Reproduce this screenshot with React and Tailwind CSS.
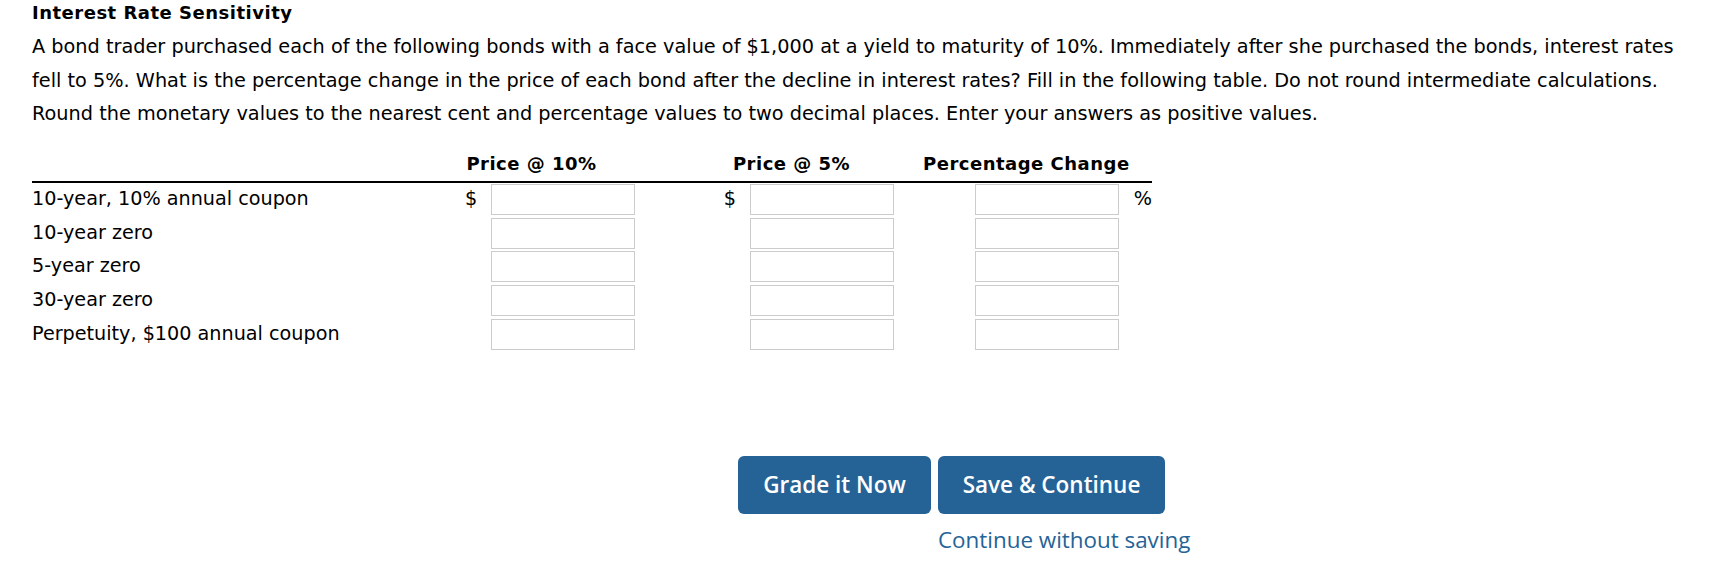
import React from "react";

const rows = [
  "10-year, 10% annual coupon",
  "10-year zero",
  "5-year zero",
  "30-year zero",
  "Perpetuity, $100 annual coupon",
];

function Box() {
  return <div className="w-[144px] h-[31px] border border-[#cccccc] bg-white" />;
}

export default function App() {
  return (
    <div className="w-[1716px] h-[568px] bg-white text-black pl-[32px] pt-[1px] font-['DejaVu_Sans',Verdana,sans-serif]">
      <div className="text-[18px] font-bold tracking-[0.5px] leading-[24px] whitespace-nowrap">Interest Rate Sensitivity</div>
      <p className="text-[19.3px] leading-[33.5px] whitespace-nowrap mt-[5px]">
        A bond trader purchased each of the following bonds with a face value of $1,000 at a yield to maturity of 10%. Immediately after she purchased the bonds, interest rates
        <br />
        fell to 5%. What is the percentage change in the price of each bond after the decline in interest rates? Fill in the following table. Do not round intermediate calculations.
        <br />
        Round the monetary values to the nearest cent and percentage values to two decimal places. Enter your answers as positive values.
      </p>

      <div className="mt-[21px] w-[1120px]">
        <div className="flex items-end text-[18px] leading-[23px] font-bold tracking-[0.5px] whitespace-nowrap border-b-2 border-black pb-[6px]">
          <div className="w-[399px]" />
          <div className="w-[201px] text-center">Price @ 10%</div>
          <div className="w-[59px]" />
          <div className="w-[201px] text-center">Price @ 5%</div>
          <div className="w-[31px]" />
          <div className="w-[200px] text-center">Percentage Change</div>
        </div>
        <div>
          {rows.map((label, i) => (
            <div key={label} className="flex items-center h-[33.75px] text-[19.2px]">
              <div className="w-[423px] whitespace-nowrap">{label}</div>
              <div className="w-[36px] pl-[10px]">{i === 0 ? "$" : ""}</div>
              <Box />
              <div className="w-[79px]" />
              <div className="w-[36px] pl-[10px]">{i === 0 ? "$" : ""}</div>
              <Box />
              <div className="w-[81px]" />
              <Box />
              <div className="pl-[15px]">{i === 0 ? "%" : ""}</div>
            </div>
          ))}
        </div>
      </div>

      <div className="ml-[706px] mt-[105px] font-['Open_Sans',sans-serif]">
        <div className="flex gap-[7px]">
          <button className="w-[193px] h-[58px] rounded-[6px] bg-[#256396] text-white text-[22.5px] font-semibold">
            Grade it Now
          </button>
          <button className="w-[227px] h-[58px] rounded-[6px] bg-[#256396] text-white text-[22.5px] font-semibold">
            Save &amp; Continue
          </button>
        </div>
        <div className="ml-[200px] mt-[11px] text-[22.4px] text-[#256396] leading-[30px] whitespace-nowrap">Continue without saving</div>
      </div>
    </div>
  );
}
